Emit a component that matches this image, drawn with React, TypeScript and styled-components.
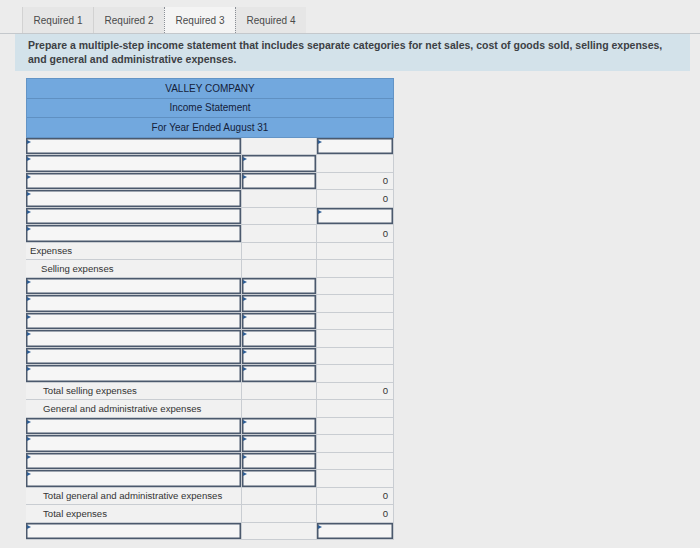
import React from "react";
import styled, { createGlobalStyle, css } from "styled-components";

const Global = createGlobalStyle`
  html, body { margin: 0; padding: 0; }
  body {
    background: #ececec;
    font-family: "Liberation Sans", Arial, sans-serif;
    width: 700px;
    height: 548px;
    overflow: hidden;
  }
`;

const Page = styled.div`
  padding-top: 7px;
`;

const TabBar = styled.div`
  display: flex;
  padding-left: 22px;
  height: 26px;
  border-bottom: 1px solid #c4c8cc;
`;

const Tab = styled.div<{ $active?: boolean; $dotted?: boolean }>`
  width: 71px;
  height: 26px;
  display: flex;
  align-items: center;
  justify-content: center;
  font-size: 10px;
  color: #4a4a4a;
  background: ${(p) => (p.$active ? "#f4f4f4" : "#e6e6e6")};
  border-left: 1px ${(p) => (p.$dotted ? "dotted #8a8f96" : "solid #d2d2d2")};
  box-sizing: border-box;
`;

const Instructions = styled.div`
  margin: 0 10px 0 15px;
  background: #d3e2ea;
  padding: 4px 20px 5px 13px;
  font-size: 10.5px;
  font-weight: bold;
  color: #3c4044;
  line-height: 14px;
`;

const Table = styled.div`
  margin: 7px 0 0 26px;
  width: 368px;
`;

const Header = styled.div`
  background: #72a8de;
  border: 1px solid #6394c6;
`;

const HeaderRow = styled.div`
  height: 18.5px;
  display: flex;
  align-items: center;
  justify-content: center;
  font-size: 10px;
  color: #14213a;
  border-bottom: 1px solid #5f90c2;
  &:last-child { border-bottom: none; }
`;

const Row = styled.div`
  display: grid;
  grid-template-columns: 216px 75px 77px;
  height: 17.5px;
`;

const Cell = styled.div<{ $input?: boolean; $indent?: number; $num?: boolean }>`
  position: relative;
  box-sizing: border-box;
  font-size: 9.6px;
  color: #333;
  display: flex;
  align-items: center;
  justify-content: ${(p) => (p.$num ? "flex-end" : "flex-start")};
  padding: 0 5px 0 ${(p) => 3 + (p.$indent ?? 0)}px;
  background: #f1f1f1;
  border-right: 1px solid #c9cdd2;
  border-bottom: 1px solid #c9cdd2;
  ${(p) =>
    p.$input &&
    css`
      background: #f6f6f6;
      box-shadow: inset 0 0 0 1.5px #4b596d;
      &::before {
        content: "";
        position: absolute;
        left: 1px;
        top: 2px;
        border-top: 2px solid transparent;
        border-bottom: 2px solid transparent;
        border-left: 4px solid #2f5e94;
      }
    `}
`;

type C = { t?: string; input?: boolean; indent?: number; num?: boolean };
type R = [C, C, C];

const I: C = { input: true };
const P: C = {};
const Z: C = { t: "0", num: true };

const rows: R[] = [
  [I, P, I],
  [I, I, P],
  [I, I, Z],
  [I, P, Z],
  [I, P, I],
  [I, P, Z],
  [{ t: "Expenses", indent: 1 }, P, P],
  [{ t: "Selling expenses", indent: 12 }, P, P],
  [I, I, P],
  [I, I, P],
  [I, I, P],
  [I, I, P],
  [I, I, P],
  [I, I, P],
  [{ t: "Total selling expenses", indent: 14 }, P, Z],
  [{ t: "General and administrative expenses", indent: 14 }, P, P],
  [I, I, P],
  [I, I, P],
  [I, I, P],
  [I, I, P],
  [{ t: "Total general and administrative expenses", indent: 14 }, P, Z],
  [{ t: "Total expenses", indent: 14 }, P, Z],
  [I, P, I],
];

export default function App() {
  return (
    <>
      <Global />
      <Page>
        <TabBar>
          <Tab>Required 1</Tab>
          <Tab>Required 2</Tab>
          <Tab $active $dotted>Required 3</Tab>
          <Tab $dotted>Required 4</Tab>
        </TabBar>
        <Instructions>
          Prepare a multiple-step income statement that includes separate categories for net sales, cost of goods sold, selling expenses,
          and general and administrative expenses.
        </Instructions>
        <Table>
          <Header>
            <HeaderRow>VALLEY COMPANY</HeaderRow>
            <HeaderRow>Income Statement</HeaderRow>
            <HeaderRow>For Year Ended August 31</HeaderRow>
          </Header>
          {rows.map((r, i) => (
            <Row key={i}>
              {r.map((c, j) => (
                <Cell key={j} $input={c.input} $indent={c.indent} $num={c.num}>
                  {c.t}
                </Cell>
              ))}
            </Row>
          ))}
        </Table>
      </Page>
    </>
  );
}
